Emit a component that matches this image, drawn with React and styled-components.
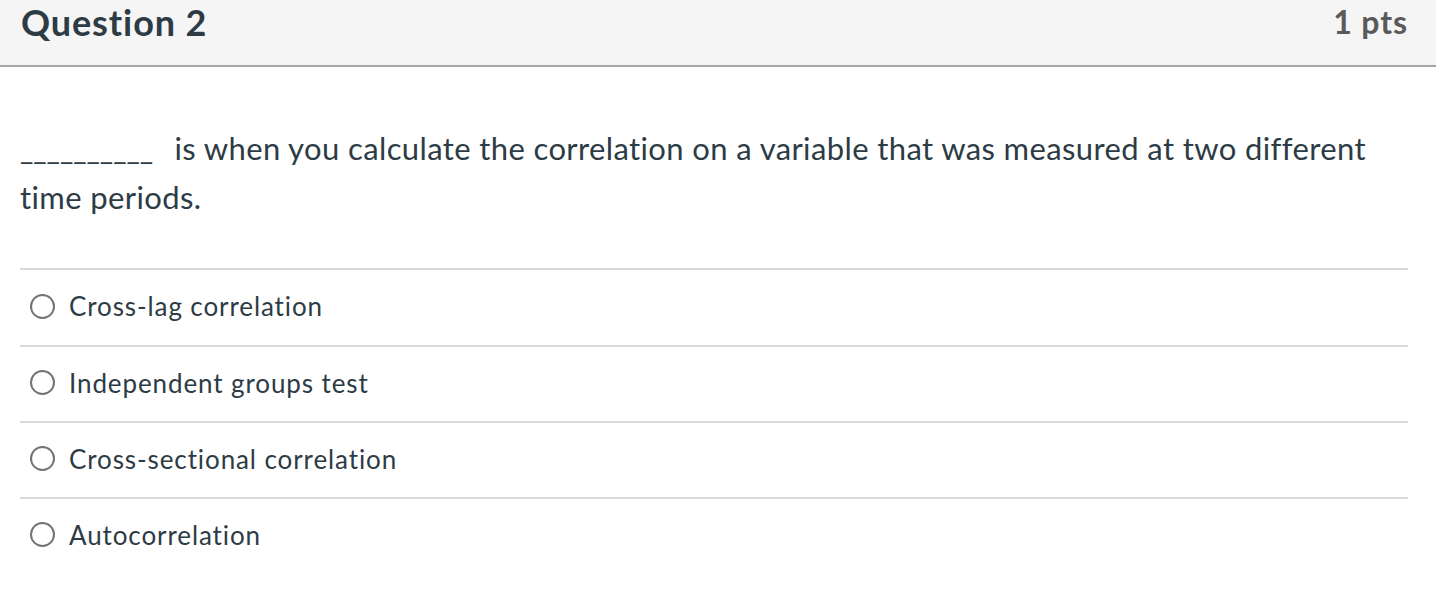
import React from 'react';
import styled, { createGlobalStyle } from 'styled-components';

const GlobalStyle = createGlobalStyle`
  html, body {
    margin: 0;
    padding: 0;
    background: #ffffff;
    font-family: Lato, "Liberation Sans", sans-serif;
    color: #2d3b45;
  }
`;

const Card = styled.div`
  width: 1436px;
`;

const Header = styled.div`
  height: 65px;
  background: #f5f5f5;
  border-bottom: 2px solid #a5a5a5;
  display: flex;
  align-items: center;
  justify-content: space-between;
  padding: 0 28px 0 21px;
  box-sizing: content-box;
`;

const Title = styled.h2`
  margin: 0;
  margin-top: -22px;
  font-size: 36px;
  font-weight: 700;
  letter-spacing: 0.9px;
  color: #2d3b45;
`;

const Points = styled.div`
  margin-top: -22px;
  font-size: 32px;
  font-weight: 700;
  letter-spacing: 0.9px;
  color: #5a5a5a;
`;

const Body = styled.div`
  padding: 57px 28px 0 20px;
`;

const QuestionText = styled.p`
  margin: 0 0 47px;
  font-size: 31px;
  line-height: 48px;
  letter-spacing: 0.38px;
`;

const Blank = styled.span`
  display: inline-block;
  font-size: 29px;
  letter-spacing: 0;
  margin-right: 13px;
`;

const Answers = styled.div`
  display: flex;
  flex-direction: column;
`;

const Answer = styled.label`
  display: flex;
  align-items: center;
  gap: 14px;
  height: 74px;
  padding: 0 0 3px 10px;
  box-sizing: border-box;
  border-top: 2px solid #dadada;
  font-size: 26px;
  letter-spacing: 0.9px;
  color: #2d3b45;
  cursor: pointer;

  &:first-child {
    height: 77px;
  }
  & + & {
    height: 76px;
  }
`;

const Radio = styled.span`
  width: 21px;
  height: 21px;
  border-radius: 50%;
  border: 2px solid #727272;
  background: #fff;
  flex: none;
`;

const answers = [
  'Cross-lag correlation',
  'Independent groups test',
  'Cross-sectional correlation',
  'Autocorrelation',
];

export default function App() {
  return (
    <Card>
      <GlobalStyle />
      <Header>
        <Title>Question 2</Title>
        <Points>1 pts</Points>
      </Header>
      <Body>
        <QuestionText>
          <Blank>__________</Blank> is when you calculate the correlation on a variable that was measured at two different time periods.
        </QuestionText>
        <Answers>
          {answers.map((a) => (
            <Answer key={a}>
              <Radio />
              {a}
            </Answer>
          ))}
        </Answers>
      </Body>
    </Card>
  );
}
